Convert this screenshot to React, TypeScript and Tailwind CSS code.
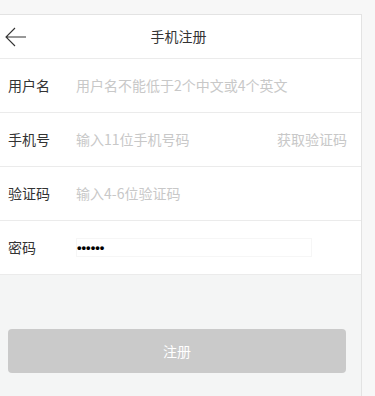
import React from "react";

const font = { fontFamily: '"Noto Sans CJK SC", "Noto Sans", sans-serif' };

function Row({ label, children }: { label: string; children: React.ReactNode }) {
  return (
    <div className="flex h-[54px] items-center border-b border-[#ebebeb] bg-white pl-2">
      <div className="w-[68px] shrink-0 text-[14px] text-[#333]">{label}</div>
      <div className="flex flex-1 items-center">{children}</div>
    </div>
  );
}

export default function App() {
  return (
    <div className="h-[396px] w-[375px] overflow-hidden bg-[#f7f7f7] pt-[14px]" style={font}>
      <div className="flex h-full w-[362px] flex-col border-t border-r border-[#e3e3e3] bg-[#f4f5f5]">
        <div className="relative flex h-[44px] items-center justify-center border-b border-[#ebebeb] bg-white">
          <svg className="absolute left-[4px] top-[11px]" width="24" height="22" viewBox="0 0 24 22" fill="none">
            <path d="M22 11H2M11 2L2 11l9 9" stroke="#333" strokeWidth="1.1" />
          </svg>
          <span className="pr-1 text-[14px] text-[#333]">手机注册</span>
        </div>
        <Row label="用户名">
          <span className="text-[14px] text-[#c8c8c8]">用户名不能低于2个中文或4个英文</span>
        </Row>
        <Row label="手机号">
          <span className="flex-1 text-[14px] text-[#c8c8c8]">输入11位手机号码</span>
          <span className="pr-[14px] text-[14px] text-[#c8c8c8]">获取验证码</span>
        </Row>
        <Row label="验证码">
          <span className="text-[14px] text-[#c8c8c8]">输入4-6位验证码</span>
        </Row>
        <Row label="密码">
          <div className="flex h-[19px] w-[236px] items-center border border-[#f6f6f6] font-['Liberation_Sans',sans-serif] text-[13px] font-bold text-black">
            ••••••
          </div>
        </Row>
        <button className="ml-2 mt-[54px] h-[44px] w-[338px] rounded-[4px] bg-[#cacaca] text-[14px] text-white">
          注册
        </button>
      </div>
    </div>
  );
}
